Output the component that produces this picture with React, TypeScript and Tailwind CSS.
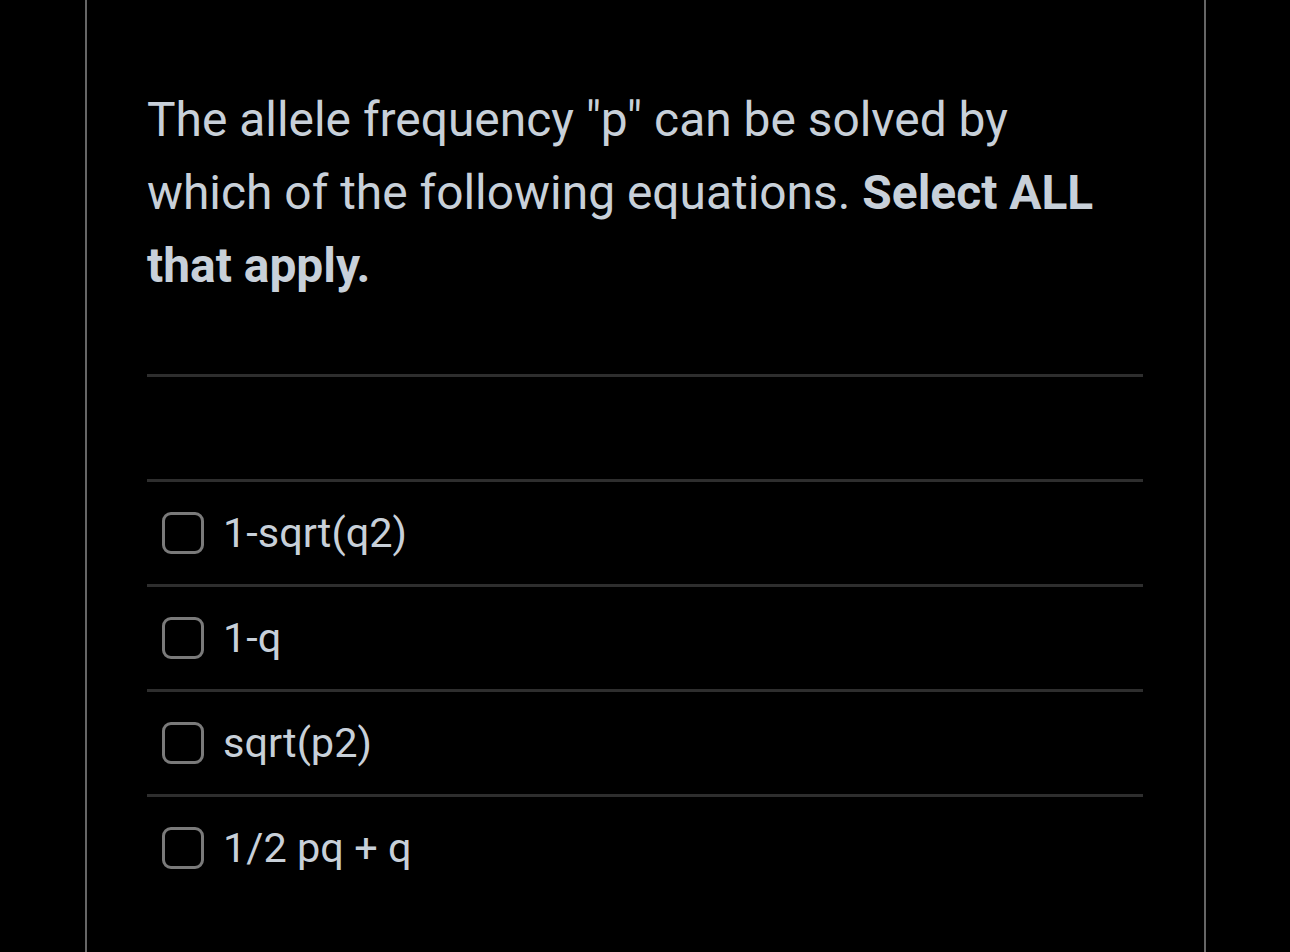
import React from 'react';

const OPTIONS = ['1-sqrt(q2)', '1-q', 'sqrt(p2)', '1/2 pq + q'];

export default function App() {
  return (
    <div className="min-h-[952px] w-[1290px] bg-black" style={{ fontFamily: 'Roboto, sans-serif' }}>
      <div className="ml-[85px] w-[1121px] min-h-[952px] border-x-2 border-[#666666] px-[60px] pt-[84px]">
        <p className="w-[970px] text-[47.9px] leading-[73px] text-[#c8d0d9]">
          The allele frequency "p" can be solved by which of the following equations.{' '}
          <span className="font-bold">Select ALL that apply.</span>
        </p>

        <div className="mt-[71px] w-[996px]">
          <div className="h-[105px] border-t-[3px] border-[#2e2e2e]" />
          {OPTIONS.map((opt) => (
            <div
              key={opt}
              className="flex h-[105px] items-center gap-[19px] border-t-[3px] border-[#2e2e2e] pl-[15px]"
            >
              <div className="h-[42px] w-[42px] rounded-[9px] border-[3px] border-[#7a7a7a]" />
              <span className="text-[41.5px] text-[#c8d0d9]">{opt}</span>
            </div>
          ))}
        </div>
      </div>
    </div>
  );
}
